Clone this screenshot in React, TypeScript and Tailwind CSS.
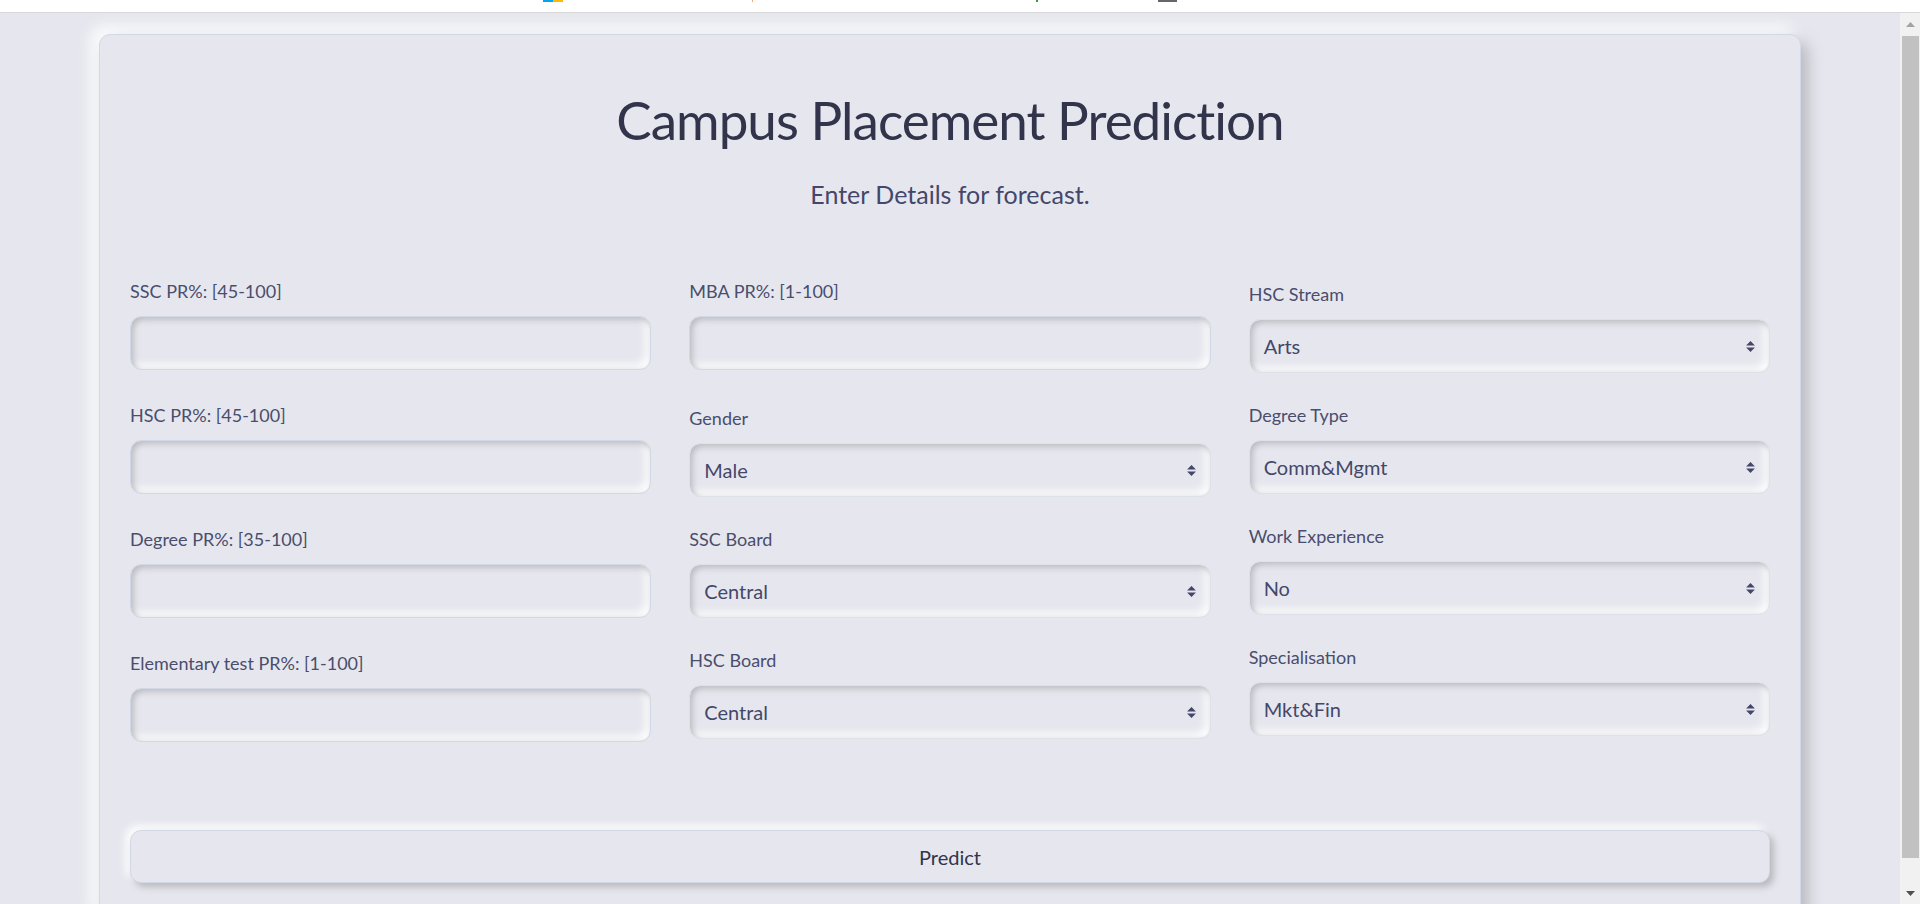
import React from "react";

const font = { fontFamily: 'Lato, "Noto Sans", "Open Sans", sans-serif' };

function Arrows() {
  return (
    <svg width="9" height="11" viewBox="0 0 8 10" className="shrink-0">
      <path d="M4 0L0 4.2h8z" fill="#44476a" />
      <path d="M4 10L0 5.8h8z" fill="#44476a" />
    </svg>
  );
}

function InputField({ label }: { label: string }) {
  return (
    <div className="flex flex-col pb-[30px]">
      <label className="h-[30px] leading-[30px] text-[18px] text-[#4a4d6d] mb-[10px]">{label}</label>
      <input
        type="text"
        className="h-[54px] w-full rounded-[11px] border border-[#d1d9e6] bg-[#e6e7ee] px-[15px] text-[20px] text-[#44476a] outline-none shadow-[inset_2.5px_2.5px_6px_#b8b9be,inset_-4px_-4px_9px_#ffffff]"
      />
    </div>
  );
}

function SelectField({ label, value }: { label: string; value: string }) {
  return (
    <div className="flex flex-col pt-[3px] pb-[24px]">
      <label className="h-[30px] leading-[30px] text-[18px] text-[#4a4d6d] mb-[10px]">{label}</label>
      <div className="h-[54px] w-full rounded-[11px] border border-[#dde1ea] bg-[#e6e7ee] pl-[14px] pr-[14px] flex items-center justify-between text-[20px] text-[#44476a] shadow-[inset_2.5px_2.5px_6px_#b8b9be,inset_-4px_-4px_9px_#ffffff]">
        <span>{value}</span>
        <Arrows />
      </div>
    </div>
  );
}

export default function App() {
  return (
    <div className="h-[904px] overflow-hidden flex flex-col bg-[#e6e7ee]" style={font}>
      <div className="h-[13px] shrink-0 bg-white border-b border-[#d9d9d9] flex items-start">
        <div className="w-[543px]" />
        <div className="w-[10px] h-[2px] bg-[#00a4ef]" />
        <div className="w-[10px] h-[2px] bg-[#ffb900]" />
        <div className="w-[189px]" />
        <div className="w-[1px] h-[2px] bg-[#f6a96b]" />
        <div className="w-[283px]" />
        <div className="w-[2px] h-[2px] bg-[#2e9e4f]" />
        <div className="w-[120px]" />
        <div className="w-[19px] h-[2px] bg-[#666666]" />
      </div>
      <div className="flex flex-1 min-h-0">
        <div className="flex-1 overflow-hidden pt-[21px]">
          <div className="mx-auto w-[1702px] rounded-[11px] border border-[#d1d9e6] bg-[#e6e7ee] shadow-[7px_7px_15px_#b8b9be,-7px_-7px_15px_#ffffff] px-[30px] pt-[49px] pb-[40px]">
            <h1 className="text-center text-[53px] leading-[72px] tracking-[-1px] text-[#31344b] font-normal">
              Campus Placement Prediction
            </h1>
            <p className="mt-[20px] text-center text-[25px] leading-[36px] text-[#44476a]">
              Enter Details for forecast.
            </p>
            <div className="mt-[64px] grid grid-cols-3 gap-x-[38px]">
              <div className="flex flex-col">
                <InputField label="SSC PR%: [45-100]" />
                <InputField label="HSC PR%: [45-100]" />
                <InputField label="Degree PR%: [35-100]" />
                <InputField label="Elementary test PR%: [1-100]" />
              </div>
              <div className="flex flex-col">
                <InputField label="MBA PR%: [1-100]" />
                <SelectField label="Gender" value="Male" />
                <SelectField label="SSC Board" value="Central" />
                <SelectField label="HSC Board" value="Central" />
              </div>
              <div className="flex flex-col">
                <SelectField label="HSC Stream" value="Arts" />
                <SelectField label="Degree Type" value="Comm&Mgmt" />
                <SelectField label="Work Experience" value="No" />
                <SelectField label="Specialisation" value="Mkt&Fin" />
              </div>
            </div>
            <button className="mt-[58px] h-[53px] w-full rounded-[11px] border border-[#d1d9e6] bg-[#e6e7ee] text-[20px] text-[#31344b] shadow-[4px_4px_7px_#b8b9be,-4px_-4px_9px_#ffffff]">
              Predict
            </button>
          </div>
        </div>
        <div className="w-[20px] shrink-0 bg-[#f1f1f1] flex flex-col items-center">
          <div className="h-[23px] w-full flex items-center justify-center">
            <svg width="9" height="5" viewBox="0 0 9 5">
              <path d="M4.5 0L0 5h9z" fill="#a3a3a3" />
            </svg>
          </div>
          <div className="h-[822px] w-[17px] bg-[#c1c1c1]" />
          <div className="flex-1 w-full flex items-end justify-center pb-[8px]">
            <svg width="9" height="5" viewBox="0 0 9 5">
              <path d="M0 0h9L4.5 5z" fill="#505050" />
            </svg>
          </div>
        </div>
      </div>
    </div>
  );
}
